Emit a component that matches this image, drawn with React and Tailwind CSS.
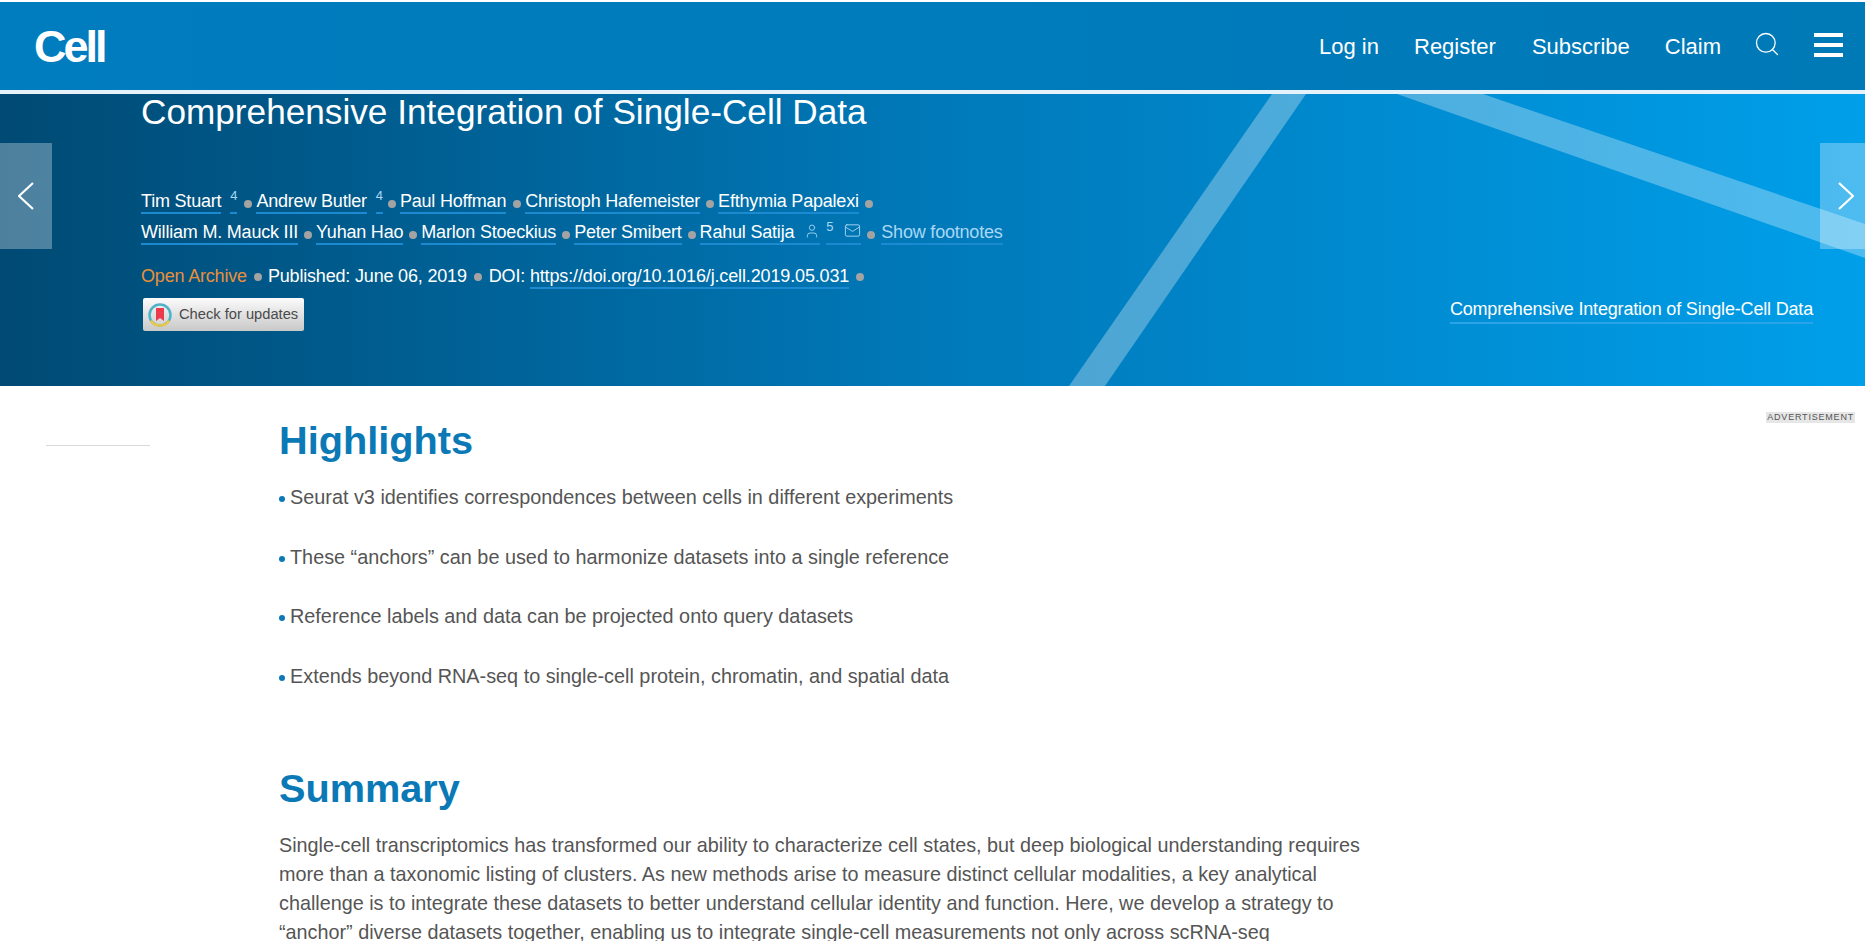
import React from "react";
import { Search, User, Mail } from "lucide-react";

const Dot = ({ className = "ml-[6px] mr-[4px]" }) => (
  <span className={`inline-block w-[8px] h-[8px] rounded-full bg-[#a3a3a3] align-[-1px] ${className}`} />
);

const A = ({ children, className = "" }) => (
  <a className={`border-b-2 border-[#1c8ad0] pb-[1px] ${className}`}>{children}</a>
);

const Sup = ({ n }) => (
  <a className="border-b-2 border-[#1c8ad0] ml-[9px] pb-[1px] text-[#a9d8f5]">
    <span className="relative top-[-7px] text-[13px]">{n}</span>
  </a>
);

const Highlight = ({ children }) => (
  <li className="flex items-center h-[30px] mb-[29.5px]">
    <span className="w-[6px] h-[6px] rounded-full bg-[#0a79b6] mr-[5px] mt-[2px]" />
    {children}
  </li>
);

const Chevron = ({ right }) => (
  <svg width="16" height="28" viewBox="0 0 16 28" fill="none" stroke="white" strokeWidth="2.2">
    <polyline points={right ? "1,1 15,14 1,27" : "15,1 1,14 15,27"} />
  </svg>
);

export default function App() {
  return (
    <div className="w-[1865px] h-[941px] overflow-hidden bg-white font-['Liberation_Sans',Arial,sans-serif]">
      <header className="mt-[2px] h-[88px] flex items-center justify-between bg-gradient-to-r from-[#007dbf] to-[#0079b7] text-white pl-[34px] pr-[22px]">
        <div className="text-[45px] font-bold tracking-[-3px] leading-none">Cell</div>
        <nav className="flex items-center text-[22px]">
          <a className="mr-[35px]">Log in</a>
          <a className="mr-[36px]">Register</a>
          <a className="mr-[35px]">Subscribe</a>
          <a className="mr-[32px]">Claim</a>
          <Search size={28} strokeWidth={1.1} className="mr-[33px] mt-[-4px]" />
          <div className="flex flex-col gap-[6px] w-[29px] mt-[-3px]">
            <span className="h-[4px] bg-white" />
            <span className="h-[4px] bg-white" />
            <span className="h-[4px] bg-white" />
          </div>
        </nav>
      </header>
      <div className="h-[4px] bg-[#e6f2f9]" />
      <section className="relative h-[292px] bg-gradient-to-r from-[#004a74] via-[#0079b9] to-[#009fea] text-white">
        <svg className="absolute inset-0" width="1865" height="292" viewBox="0 0 1865 292">
          <polygon points="1272,0 1306,0 1105,292 1069,292" fill="#ffffff" fillOpacity="0.3" />
          <polygon points="1397,0 1483,0 1865,130 1865,164" fill="#ffffff" fillOpacity="0.3" />
        </svg>
        <div className="absolute left-0 top-[49px] w-[52px] h-[106px] bg-white/30 flex items-center justify-center">
          <Chevron />
        </div>
        <div className="absolute right-0 top-[49px] w-[45px] h-[106px] bg-white/30 flex items-center justify-center">
          <span className="ml-[6px] flex"><Chevron right /></span>
        </div>
        <div className="relative pl-[141px]">
          <h1 className="text-[35.2px] leading-[36px] font-normal">Comprehensive Integration of Single-Cell Data</h1>
          <div className="mt-[56px] text-[18px] tracking-[-0.2px]">
            <div className="h-[31px] leading-[31px] whitespace-nowrap">
              <A>Tim Stuart</A><Sup n="4" /><Dot className="ml-[7px] mr-[4px]" /><A>Andrew Butler</A><Sup n="4" /><Dot className="ml-[5px] mr-[4px]" /><A>Paul Hoffman</A><Dot className="ml-[7px] mr-[4px]" /><A>Christoph Hafemeister</A><Dot className="ml-[6px] mr-[4px]" /><A>Efthymia Papalexi</A><Dot />
            </div>
            <div className="h-[31px] leading-[31px] whitespace-nowrap">
              <A>William M. Mauck III</A><Dot /><A>Yuhan Hao</A><Dot /><A>Marlon Stoeckius</A><Dot /><A>Peter Smibert</A><Dot /><A>Rahul Satija<User size={16} strokeWidth={1.3} className="inline text-[#a9d8f5] ml-[10px] align-[-1px]" /></A>
              <a className="border-b-2 border-[#1c8ad0] pb-[1px] ml-[6px] text-[#a9d8f5]">
                <span className="relative top-[-7px] text-[13px] mr-[11px]">5</span>
                <Mail size={17} strokeWidth={1.3} className="inline align-[-1px]" />
              </a>
              <Dot className="ml-[6px] mr-[6px]" /><A className="text-[#a9d8f5]">Show footnotes</A>
            </div>
          </div>
          <div className="mt-[13px] h-[31px] text-[18px] leading-[31px] tracking-[-0.18px] whitespace-nowrap">
            <span className="text-[#e98f3c]">Open Archive</span><Dot className="ml-[7px] mr-[6px] w-[7px] h-[7px] align-[1px]" /><span>Published: June 06, 2019</span><Dot className="mx-[7px] w-[7px] h-[7px] align-[1px]" /><span>DOI:</span> <A className="tracking-[-0.14px]">https://doi.org/10.1016/j.cell.2019.05.031</A><Dot className="mx-[7px] w-[7px] h-[7px] align-[1px]" />
          </div>
          <div className="ml-[2px] mt-[6px] w-[161px] h-[33px] flex items-center rounded-[2px] bg-gradient-to-b from-[#fbfbfb] to-[#c9c9c9] text-[#4a4a4a] text-[14.7px] whitespace-nowrap">
            <svg width="24" height="24" viewBox="0 0 24 24" className="ml-[5px] mr-[7px] shrink-0">
              <circle cx="12" cy="12" r="10.5" fill="none" stroke="#4fb3c8" strokeWidth="2.5" />
              <path d="M3 17.5a10.5 10.5 0 0 0 18 0" fill="none" stroke="#e7c84a" strokeWidth="2.5" />
              <path d="M8 5h8v13l-4-3-4 3z" fill="#ec3a4c" />
            </svg>
            Check for updates
          </div>
        </div>
        <a className="absolute right-[52px] top-[203px] text-[18px] leading-[24px] tracking-[-0.18px] border-b-2 border-[#2ba3e8] pb-[1px] whitespace-nowrap">Comprehensive Integration of Single-Cell Data</a>
      </section>
      <main className="relative flex text-[#555555]">
        <div className="w-[279px] shrink-0 pl-[46px]">
          <div className="mt-[59px] w-[104px] h-[1px] bg-[#d9d9d9]" />
        </div>
        <div className="w-[1100px] shrink-0">
          <h2 className="mt-[31px] text-[39.7px] leading-[46px] font-bold text-[#0a79b6]">Highlights</h2>
          <ul className="mt-[20px] text-[19.83px]">
            <Highlight>Seurat v3 identifies correspondences between cells in different experiments</Highlight>
            <Highlight>These “anchors” can be used to harmonize datasets into a single reference</Highlight>
            <Highlight>Reference labels and data can be projected onto query datasets</Highlight>
            <Highlight>Extends beyond RNA-seq to single-cell protein, chromatin, and spatial data</Highlight>
          </ul>
          <h2 className="mt-[73px] text-[39.7px] leading-[46px] font-bold text-[#0a79b6]">Summary</h2>
          <p className="mt-[20px] text-[19.8px] leading-[29px]">
            Single-cell transcriptomics has transformed our ability to characterize cell states, but deep biological understanding requires<br />
            more than a taxonomic listing of clusters. As new methods arise to measure distinct cellular modalities, a key analytical<br />
            challenge is to integrate these datasets to better understand cellular identity and function. Here, we develop a strategy to<br />
            “anchor” diverse datasets together, enabling us to integrate single-cell measurements not only across scRNA-seq
          </p>
        </div>
        <div className="absolute right-[10px] top-[26px] bg-[#e6e6e6] px-[1px] text-[9px] leading-[11px] tracking-[0.8px] text-[#555]">ADVERTISEMENT</div>
      </main>
    </div>
  );
}
